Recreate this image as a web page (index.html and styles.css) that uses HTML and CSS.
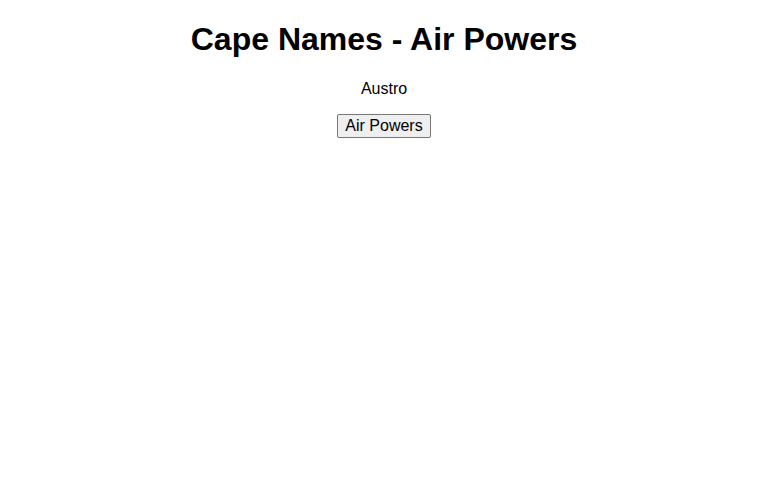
FILE: index.html
```html
<!DOCTYPE html>
<html lang="en">
<head>
<meta charset="utf-8">
<title>Cape Names - Air Powers</title>
<link rel="stylesheet" href="styles.css">
</head>
<body>
<main class="page">
  <h1 class="title">Cape Names - Air Powers</h1>
  <p class="name">Austro</p>
  <button class="action" type="button">Air Powers</button>
</main>
</body>
</html>
```
FILE: styles.css
```css
body {
  margin: 0;
  font-family: "Liberation Sans", Arial, sans-serif;
  background: #fff;
  color: #000;
}

.page {
  text-align: center;
}

.title {
  font-size: 32px;
  font-weight: bold;
  margin: 21px 0 22px;
}

.name {
  font-size: 16px;
  margin: 22px 0 16px;
}

.action {
  font-family: "Liberation Sans", Arial, sans-serif;
  font-size: 16px;
  padding: 2px 7px;
  border: 1px solid #767676;
  border-radius: 2px;
  background: #efefef;
  color: #000;
}
```
